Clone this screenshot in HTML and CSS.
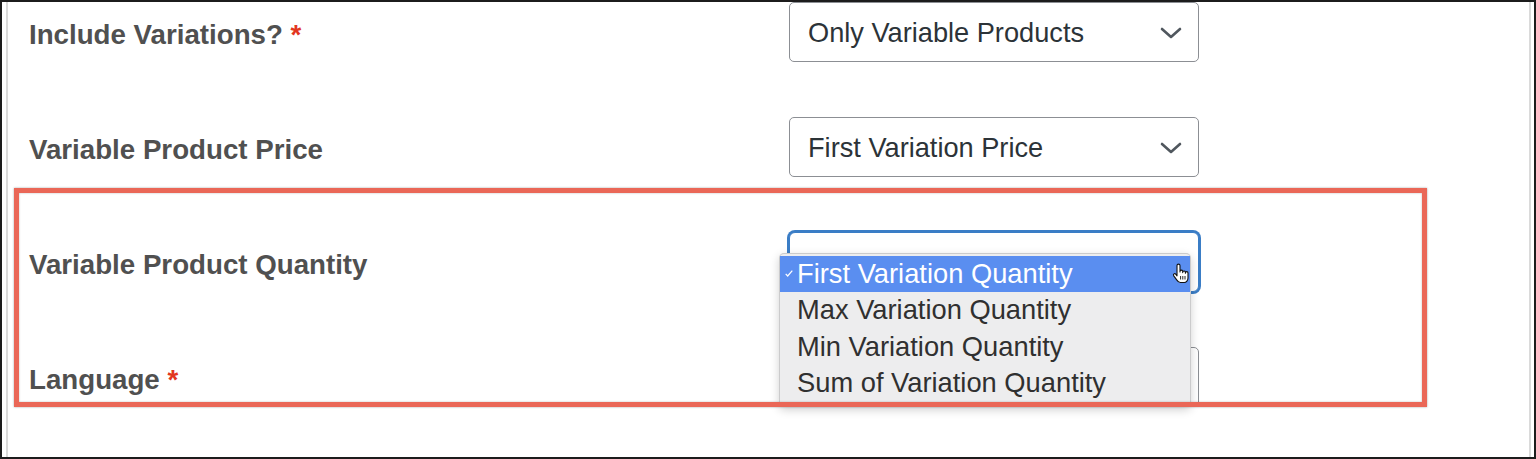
FILE: index.html
```html
<!DOCTYPE html>
<html lang="en">
<head>
<meta charset="utf-8">
<title>Settings</title>
<link rel="stylesheet" href="styles.css">
</head>
<body>
<div class="frame">
  <div class="panel">
    <div class="row">
      <div class="label">Include Variations? <span class="req">*</span></div>
      <div class="select">
        <span class="value">Only Variable Products</span>
        <svg class="chev" width="22" height="12" viewBox="0 0 22 12"><polyline points="2,2 11,10 20,2" fill="none" stroke="#50575e" stroke-width="2.6" stroke-linecap="round" stroke-linejoin="round"/></svg>
      </div>
    </div>
    <div class="row">
      <div class="label">Variable Product Price</div>
      <div class="select">
        <span class="value">First Variation Price</span>
        <svg class="chev" width="22" height="12" viewBox="0 0 22 12"><polyline points="2,2 11,10 20,2" fill="none" stroke="#50575e" stroke-width="2.6" stroke-linecap="round" stroke-linejoin="round"/></svg>
      </div>
    </div>
    <div class="row">
      <div class="label">Variable Product Quantity</div>
      <div class="select-wrap">
        <div class="select focused"></div>
        <ul class="menu">
          <li class="opt active">
            <svg class="check" width="8" height="7" viewBox="0 0 8 7"><polyline points="0.7,3.8 2.7,6 7.3,0.7" fill="none" stroke="#ffffff" stroke-width="1.2"/></svg>
            <span>First Variation Quantity</span>
            <svg class="cursor" width="17" height="21" viewBox="0 0 17 21"><path d="M5 10.5 V2.6 a1.5 1.5 0 0 1 3 0 V9 V8.2 a1.4 1.4 0 0 1 2.7 0 V9.6 V9 a1.4 1.4 0 0 1 2.7 0 V10.2 V9.9 a1.3 1.3 0 0 1 2.6 0 V15 c0 2.2 -1.6 4.5 -3.8 4.5 H8.3 c-1.6 0 -2.6 -1 -3.6 -2.6 L1.6 12.6 a1.3 1.3 0 0 1 2.1 -1.5 L5 12.8 Z" fill="#ffffff" stroke="#111111" stroke-width="1.1" stroke-linejoin="round"/><path d="M8.6 13 V16.5 M10.8 13 V16.5 M13 13 V16.5" stroke="#111111" stroke-width="0.9"/></svg>
          </li>
          <li class="opt">Max Variation Quantity</li>
          <li class="opt">Min Variation Quantity</li>
          <li class="opt">Sum of Variation Quantity</li>
        </ul>
      </div>
    </div>
    <div class="row">
      <div class="label">Language <span class="req">*</span></div>
      <div class="select"></div>
    </div>
  </div>
  <div class="highlight"></div>
</div>
</body>
</html>
```

FILE: styles.css
```css
html, body {
  margin: 0;
  padding: 0;
  background: #ffffff;
}

.frame {
  position: relative;
  width: 1536px;
  height: 459px;
  box-sizing: border-box;
  border: 2px solid #1c1c1c;
  overflow: hidden;
  background: #ffffff;
  font-family: "Liberation Sans", Arial, sans-serif;
}

.panel {
  box-sizing: border-box;
  height: 100%;
  margin-left: 4px;
  margin-right: 3px;
  border-left: 2px solid #dadada;
  border-right: 2px solid #dadada;
  padding-left: 21px;
  display: flex;
  flex-direction: column;
  gap: 55px;
}

.row {
  display: grid;
  grid-template-columns: 760px 410px;
  align-items: center;
  height: 60px;
}

.label {
  font-weight: bold;
  font-size: 27.7px;
  color: #505050;
  padding-top: 5px;
  white-space: nowrap;
}

.req {
  color: #e2361f;
}

.select-wrap {
  position: relative;
  height: 60px;
}

.select {
  box-sizing: border-box;
  height: 60px;
  width: 410px;
  border: 1px solid #8c8f94;
  border-radius: 5px;
  background: #ffffff;
  display: flex;
  align-items: center;
  justify-content: space-between;
  padding: 1px 16px 0 18px;
  font-size: 27.2px;
  color: #2c3338;
}

.select.focused {
  border-color: #3a7dc6;
  box-shadow: 0 0 0 2px #3a7dc6;
  border-radius: 6px;
}

.chev {
  flex: none;
}

.menu {
  position: absolute;
  left: -10px;
  top: 21px;
  width: 412px;
  margin: 0;
  padding: 2px 0 4px;
  list-style: none;
  box-sizing: border-box;
  background: #ededee;
  border: 1px solid rgba(0, 0, 0, 0.14);
  border-radius: 5px;
  box-shadow: 0 3px 10px rgba(0, 0, 0, 0.18);
  z-index: 2;
}

.opt {
  position: relative;
  height: 36.5px;
  display: flex;
  align-items: center;
  padding-left: 17px;
  font-size: 27.3px;
  color: #303030;
  white-space: nowrap;
}

.opt.active {
  background: #5a8ef0;
  color: #ffffff;
  height: 36px;
}

.check {
  position: absolute;
  left: 5px;
  top: 14px;
}

.cursor {
  position: absolute;
  left: 392px;
  top: 7px;
}

.highlight {
  position: absolute;
  left: 12px;
  top: 186px;
  width: 1413px;
  height: 219px;
  box-sizing: border-box;
  border: 5px solid #ea6757;
  box-shadow: 0 0 2px rgba(0, 0, 0, 0.35), inset 0 0 2px rgba(0, 0, 0, 0.3);
  pointer-events: none;
  z-index: 5;
}
```
